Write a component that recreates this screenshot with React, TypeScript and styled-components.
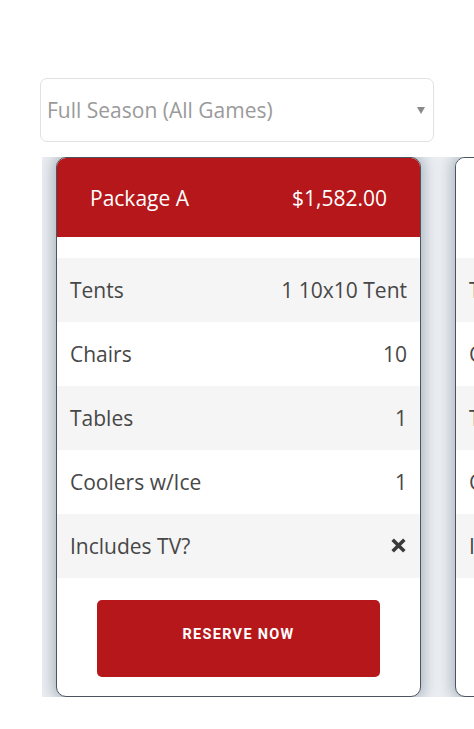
import React from "react";
import styled, { createGlobalStyle } from "styled-components";

const Global = createGlobalStyle`
  html, body { margin: 0; padding: 0; background: #fff; }
  body { font-family: "Open Sans", "Liberation Sans", sans-serif; overflow: hidden; }
  * { box-sizing: border-box; }
`;

const Page = styled.div`
  width: 474px;
  height: 729px;
  padding-top: 78px;
  overflow: hidden;
`;

const Select = styled.div`
  margin-left: 40px;
  width: 394px;
  height: 64px;
  border: 1px solid #e1e1e1;
  border-radius: 7px;
  display: flex;
  align-items: center;
  justify-content: space-between;
  padding: 0 8px 0 6px;
  color: #9a9a9a;
  font-size: 21px;
  background: #fff;
`;

const Caret = styled.span`
  width: 0;
  height: 0;
  border-left: 4px solid transparent;
  border-right: 4px solid transparent;
  border-top: 7px solid #8a8a8a;
  margin-top: 1px;
`;

const Carousel = styled.div`
  margin-top: 15px;
  margin-left: 42px;
  height: 540px;
  background: #ebeef1;
  display: flex;
  gap: 34px;
  padding-left: 14px;
  overflow: hidden;
`;

const Card = styled.div`
  flex: 0 0 365px;
  height: 540px;
  border: 1.5px solid #4b5560;
  border-radius: 10px;
  background: #fff;
  box-shadow: 0 0 14px 3px rgba(80, 100, 125, 0.42);
  display: flex;
  flex-direction: column;
  overflow: hidden;
`;

const Header = styled.div<{ $red: boolean }>`
  height: 79px;
  background: ${(p) => (p.$red ? "#b5171a" : "#fff")};
  color: #fff;
  display: flex;
  align-items: center;
  justify-content: space-between;
  padding: 0 33px 0 33px;
  font-size: 21px;
  margin-bottom: 21px;
  flex-shrink: 0;
`;

const Row = styled.div<{ $shade: boolean }>`
  height: 64px;
  background: ${(p) => (p.$shade ? "#f5f5f5" : "#fff")};
  display: flex;
  align-items: center;
  justify-content: space-between;
  padding: 0 13px;
  color: #474747;
  font-size: 21px;
  flex-shrink: 0;
`;

const ButtonWrap = styled.div`
  padding: 22px 40px 0 40px;
`;

const Button = styled.button`
  width: 100%;
  height: 77px;
  border: none;
  border-radius: 5px;
  background: #b5171a;
  color: #fff;
  font-family: Roboto, "Liberation Sans", sans-serif;
  font-weight: 700;
  font-size: 14.5px;
  letter-spacing: 1.3px;
  padding: 0 0 8px 0;
  cursor: pointer;
`;

const XIcon = () => (
  <svg width="17" height="17" viewBox="0 0 16 16">
    <path d="M2.5 2.5 L13.5 13.5 M13.5 2.5 L2.5 13.5" stroke="#3a3a3a" strokeWidth="3.3" strokeLinecap="butt" />
  </svg>
);

type Pkg = {
  name: string;
  price: string;
  red: boolean;
  rows: [string, React.ReactNode][];
};

const packages: Pkg[] = [
  {
    name: "Package A",
    price: "$1,582.00",
    red: true,
    rows: [
      ["Tents", "1 10x10 Tent"],
      ["Chairs", "10"],
      ["Tables", "1"],
      ["Coolers w/Ice", "1"],
      ["Includes TV?", <XIcon key="x" />],
    ],
  },
  {
    name: "",
    price: "",
    red: false,
    rows: [
      ["Tents", ""],
      ["Chairs", ""],
      ["Tables", ""],
      ["Coolers w/Ice", ""],
      ["Includes TV?", ""],
    ],
  },
];

export default function App() {
  return (
    <Page>
      <Global />
      <Select>
        <span>Full Season (All Games)</span>
        <Caret />
      </Select>
      <Carousel>
        {packages.map((p, i) => (
          <Card key={i}>
            <Header $red={p.red}>
              <span>{p.name}</span>
              <span>{p.price}</span>
            </Header>
            {p.rows.map(([k, v], j) => (
              <Row key={k} $shade={j % 2 === 0}>
                <span>{k}</span>
                <span>{v}</span>
              </Row>
            ))}
            <ButtonWrap>
              <Button>RESERVE NOW</Button>
            </ButtonWrap>
          </Card>
        ))}
      </Carousel>
    </Page>
  );
}
